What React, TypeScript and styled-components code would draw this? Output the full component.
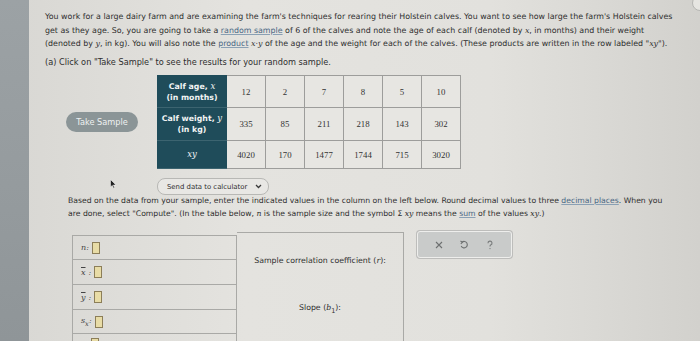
import React from "react";
import styled, { createGlobalStyle } from "styled-components";

const Global = createGlobalStyle`
  html, body { margin: 0; padding: 0; }
  body {
    width: 700px; height: 341px; overflow: hidden;
    background: #dcdbd7;
    font-family: "DejaVu Sans", Verdana, sans-serif;
    color: #2e2e2e;
  }
`;

const Page = styled.div`
  position: relative;
  display: flex;
  width: 700px;
  height: 341px;
  overflow: hidden;
  background: linear-gradient(90deg, #d8d7d3 0%, #e4e3df 35%, #e2e1dd 70%, #d2d1cd 100%);
`;

const Bezel = styled.div`
  flex: none;
  width: 29px;
  background: linear-gradient(180deg, #9ca2a5, #8f9598);
`;

const Main = styled.div`
  flex: 1;
  padding-left: 16px;
  display: flex;
  flex-direction: column;
`;

const TopTab = styled.div`
  margin-left: 31px;
  width: 24px;
  height: 5px;
  border-radius: 0 0 4px 4px;
  background: #aac0c4;
`;

const CornerButton = styled.div`
  position: absolute;
  right: -8px;
  top: -5px;
  width: 14px;
  height: 14px;
  border: 1px solid #b5b5b2;
  border-radius: 50%;
  background: #e6e5e1;
`;

const Para = styled.p<{ $size?: number; $lh?: number; $indent?: number; $top?: number }>`
  margin: ${(p) => p.$top ?? 0}px 0 0 ${(p) => p.$indent ?? 0}px;
  font-size: ${(p) => p.$size ?? 7.9}px;
  line-height: ${(p) => p.$lh ?? 13.5}px;
  color: #2e2e2e;
  white-space: nowrap;
`;

const Link = styled.span`
  color: #4a6784;
  text-decoration: underline;
  text-decoration-color: #8aa0b4;
`;

const V = styled.span`
  font-family: "DejaVu Serif", "Liberation Serif", serif;
  font-style: italic;
`;

const SampleRow = styled.div`
  display: flex;
  align-items: center;
  margin: 6px 0 0 21px;
  gap: 19px;
`;

const TakeButton = styled.button`
  width: 72px;
  height: 20px;
  border: none;
  border-radius: 10px;
  background: #8b9597;
  color: #eef1f1;
  font-family: "DejaVu Sans", Verdana, sans-serif;
  font-size: 8.2px;
  padding: 0;
`;

const DataTable = styled.table`
  border-collapse: collapse;
`;

const HeadCell = styled.th<{ $h: number }>`
  width: 68px;
  height: ${(p) => p.$h}px;
  padding: 0;
  background: #1f4c5a;
  border: 1px solid #1f4c5a;
  border-bottom-color: #3c6470;
  color: #f2f4f4;
  font-size: 7.8px;
  line-height: 11px;
  font-weight: bold;
  text-align: center;
  vertical-align: middle;
`;

const HeadVar = styled.span`
  font-family: "DejaVu Serif", "Liberation Serif", serif;
  font-style: italic;
  font-weight: normal;
  font-size: 8.5px;
`;

const DataCell = styled.td`
  width: 38px;
  padding: 0;
  border: 1px solid #9d9d9b;
  background: #e7e6e2;
  text-align: center;
  vertical-align: middle;
  font-family: "Liberation Serif", "DejaVu Serif", serif;
  font-size: 8.8px;
  color: #333;
`;

const SendRow = styled.div`
  margin: 9px 0 0 112px;
  display: flex;
`;

const SendPill = styled.div`
  display: flex;
  align-items: center;
  gap: 8px;
  height: 15px;
  padding: 0 6px 0 9px;
  border: 1px solid #b8b8b5;
  border-radius: 8px;
  background: #e8e7e4;
  font-size: 6.9px;
  color: #2e2e2e;
`;

const Bottom = styled.div`
  display: flex;
  align-items: flex-start;
  margin: 12px 0 0 27px;
`;

const LeftCol = styled.div`
  width: 163px;
  border-top: 1px solid #a9a9a6;
  border-left: 1px solid #a9a9a6;
  border-right: 1px solid #a9a9a6;
  margin-top: 3px;
`;

const VarRow = styled.div<{ $h: number }>`
  display: flex;
  align-items: center;
  gap: 3px;
  height: ${(p) => p.$h}px;
  padding-left: 8px;
  border-bottom: 1px solid #a9a9a6;
  font-family: "DejaVu Serif", "Liberation Serif", serif;
  font-style: italic;
  font-size: 8px;
  color: #444;
`;

const Bar = styled.span`
  text-decoration: overline;
`;

const InBox = styled.span`
  display: inline-block;
  width: 6px;
  height: 10px;
  border: 1px solid #8c7e58;
  background: #e8dca6;
`;

const RightCol = styled.div`
  width: 166px;
  height: 120px;
  border-top: 1px solid #a9a9a6;
  border-right: 1px solid #a9a9a6;
  display: flex;
  flex-direction: column;
  align-items: center;
  font-size: 7.8px;
  color: #2e2e2e;
`;

const RLabel = styled.div<{ $top: number }>`
  margin-top: ${(p) => p.$top}px;
  white-space: nowrap;
`;

const Tools = styled.div`
  margin: -1px 0 0 13px;
  width: 95px;
  height: 27px;
  border: 1px solid #eeeeec;
  border-radius: 3px;
  background: #c9cbca;
  box-shadow: 0 0 0 1px #bdbdbb;
  display: flex;
  align-items: center;
  justify-content: space-around;
  padding: 0 8px;
  box-sizing: border-box;
`;

const ToolIcon = styled.svg`
  width: 10px;
  height: 10px;
`;

const Cursor = styled.svg`
  position: absolute;
  left: 110px;
  top: 179px;
  width: 7px;
  height: 10px;
`;

const cols = [
  ["12", "335", "4020"],
  ["2", "85", "170"],
  ["7", "211", "1477"],
  ["8", "218", "1744"],
  ["5", "143", "715"],
  ["10", "302", "3020"],
];

export default function App() {
  return (
    <>
      <Global />
      <Page>
        <Bezel />
        <Main>
          <TopTab />
          <Para $top={10}>
            You work for a large dairy farm and are examining the farm's techniques for rearing their Holstein calves. You want to see how large the farm's Holstein calves
            <br />
            get as they age. So, you are going to take a <Link>random sample</Link> of 6 of the calves and note the age of each calf (denoted by <V>x</V>, in months) and their weight
            <br />
            (denoted by <V>y</V>, in kg). You will also note the <Link>product</Link> <V>x·y</V> of the age and the weight for each of the calves. (These products are written in the row labeled "<V>xy</V>").
          </Para>
          <Para $top={5} $size={8.2}>(a) Click on "Take Sample" to see the results for your random sample.</Para>
          <SampleRow>
            <TakeButton>Take Sample</TakeButton>
            <DataTable>
              <tbody>
                <tr>
                  <HeadCell $h={31}>
                    Calf age, <HeadVar>x</HeadVar>
                    <br />
                    (in months)
                  </HeadCell>
                  {cols.map((c, i) => (
                    <DataCell key={i}>{c[0]}</DataCell>
                  ))}
                </tr>
                <tr>
                  <HeadCell $h={32}>
                    Calf weight, <HeadVar>y</HeadVar>
                    <br />
                    (in kg)
                  </HeadCell>
                  {cols.map((c, i) => (
                    <DataCell key={i}>{c[1]}</DataCell>
                  ))}
                </tr>
                <tr>
                  <HeadCell $h={27}>
                    <HeadVar>xy</HeadVar>
                  </HeadCell>
                  {cols.map((c, i) => (
                    <DataCell key={i}>{c[2]}</DataCell>
                  ))}
                </tr>
              </tbody>
            </DataTable>
          </SampleRow>
          <SendRow>
            <SendPill>
              Send data to calculator
              <svg width="7" height="5" viewBox="0 0 7 5">
                <path d="M1 1 L3.5 3.5 L6 1" fill="none" stroke="#3a3a3a" strokeWidth="1.3" />
              </svg>
            </SendPill>
          </SendRow>
          <Para $top={-1} $indent={23} $size={7.7} $lh={13}>
            Based on the data from your sample, enter the indicated values in the column on the left below. Round decimal values to three <Link>decimal places</Link>. When you
            <br />
            are done, select "Compute". (In the table below, <V>n</V> is the sample size and the symbol Σ <V>xy</V> means the <Link>sum</Link> of the values <V>xy</V>.)
          </Para>
          <Bottom>
            <LeftCol>
              <VarRow $h={23}>
                n: <InBox />
              </VarRow>
              <VarRow $h={24}>
                <Bar>x</Bar>: <InBox />
              </VarRow>
              <VarRow $h={24}>
                <Bar>y</Bar>: <InBox />
              </VarRow>
              <VarRow $h={23}>
                <span>
                  s<sub>x</sub>:
                </span>
                <InBox />
              </VarRow>
              <VarRow $h={20}>
                <span style={{ visibility: "hidden" }}>s:</span>
                <InBox />
              </VarRow>
            </LeftCol>
            <RightCol>
              <RLabel $top={23}>
                Sample correlation coefficient (<V>r</V>):
              </RLabel>
              <RLabel $top={38}>
                Slope (<V>b</V>
                <sub>1</sub>):
              </RLabel>
            </RightCol>
            <Tools>
              <ToolIcon viewBox="0 0 10 10">
                <path d="M2 2 L8 8 M8 2 L2 8" stroke="#6d7070" strokeWidth="1.1" />
              </ToolIcon>
              <ToolIcon viewBox="0 0 10 10">
                <path d="M3 2.2 A3.2 3.2 0 1 1 2.2 6" fill="none" stroke="#6d7070" strokeWidth="1.1" />
                <path d="M1.5 1 L3.4 2.3 L1.8 3.8" fill="none" stroke="#6d7070" strokeWidth="1.1" />
              </ToolIcon>
              <ToolIcon viewBox="0 0 10 10">
                <path d="M3 3.2 A2 2 0 1 1 5.6 5 Q5 5.4 5 6.6" fill="none" stroke="#7a7d7d" strokeWidth="1.1" />
                <circle cx="5" cy="8.6" r="0.7" fill="#7a7d7d" />
              </ToolIcon>
            </Tools>
          </Bottom>
        </Main>
        <CornerButton />
        <Cursor viewBox="0 0 7 10">
          <path d="M0.5 0.5 L0.5 8 L2.3 6.4 L3.6 9.3 L4.6 8.8 L3.4 6 L6 6 Z" fill="#222" stroke="#fff" strokeWidth="0.5" />
        </Cursor>
      </Page>
    </>
  );
}
